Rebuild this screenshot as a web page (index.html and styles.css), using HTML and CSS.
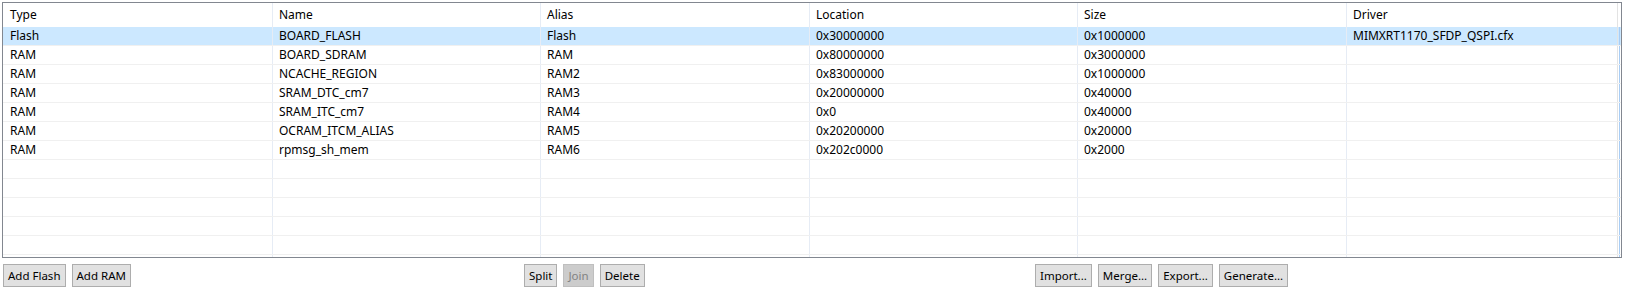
FILE: index.html
```html
<!DOCTYPE html>
<html>
<head>
<meta charset="utf-8">
<link rel="stylesheet" href="styles.css">
</head>
<body>
<div class="panel">
  <div class="table">
    <div class="row head">
      <div class="cell">Type</div>
      <div class="cell">Name</div>
      <div class="cell">Alias</div>
      <div class="cell">Location</div>
      <div class="cell">Size</div>
      <div class="cell">Driver</div>
      <div class="strip"></div>
    </div>
    <div class="body">
      <div class="row selected">
        <div class="cell">Flash</div><div class="cell">BOARD_FLASH</div><div class="cell">Flash</div><div class="cell">0x30000000</div><div class="cell">0x1000000</div><div class="cell">MIMXRT1170_SFDP_QSPI.cfx</div><div class="strip"></div>
      </div>
      <div class="row">
        <div class="cell">RAM</div><div class="cell">BOARD_SDRAM</div><div class="cell">RAM</div><div class="cell">0x80000000</div><div class="cell">0x3000000</div><div class="cell"></div><div class="strip"></div>
      </div>
      <div class="row">
        <div class="cell">RAM</div><div class="cell">NCACHE_REGION</div><div class="cell">RAM2</div><div class="cell">0x83000000</div><div class="cell">0x1000000</div><div class="cell"></div><div class="strip"></div>
      </div>
      <div class="row">
        <div class="cell">RAM</div><div class="cell">SRAM_DTC_cm7</div><div class="cell">RAM3</div><div class="cell">0x20000000</div><div class="cell">0x40000</div><div class="cell"></div><div class="strip"></div>
      </div>
      <div class="row">
        <div class="cell">RAM</div><div class="cell">SRAM_ITC_cm7</div><div class="cell">RAM4</div><div class="cell">0x0</div><div class="cell">0x40000</div><div class="cell"></div><div class="strip"></div>
      </div>
      <div class="row">
        <div class="cell">RAM</div><div class="cell">OCRAM_ITCM_ALIAS</div><div class="cell">RAM5</div><div class="cell">0x20200000</div><div class="cell">0x20000</div><div class="cell"></div><div class="strip"></div>
      </div>
      <div class="row">
        <div class="cell">RAM</div><div class="cell">rpmsg_sh_mem</div><div class="cell">RAM6</div><div class="cell">0x202c0000</div><div class="cell">0x2000</div><div class="cell"></div><div class="strip"></div>
      </div>
      <div class="row"><div class="cell"></div><div class="cell"></div><div class="cell"></div><div class="cell"></div><div class="cell"></div><div class="cell"></div><div class="strip"></div></div>
      <div class="row"><div class="cell"></div><div class="cell"></div><div class="cell"></div><div class="cell"></div><div class="cell"></div><div class="cell"></div><div class="strip"></div></div>
      <div class="row"><div class="cell"></div><div class="cell"></div><div class="cell"></div><div class="cell"></div><div class="cell"></div><div class="cell"></div><div class="strip"></div></div>
      <div class="row"><div class="cell"></div><div class="cell"></div><div class="cell"></div><div class="cell"></div><div class="cell"></div><div class="cell"></div><div class="strip"></div></div>
      <div class="row"><div class="cell"></div><div class="cell"></div><div class="cell"></div><div class="cell"></div><div class="cell"></div><div class="cell"></div><div class="strip"></div></div>
      <div class="row"><div class="cell"></div><div class="cell"></div><div class="cell"></div><div class="cell"></div><div class="cell"></div><div class="cell"></div><div class="strip"></div></div>
    </div>
  </div>
  <div class="actions">
    <div class="group">
      <button class="btn">Add Flash</button>
      <button class="btn">Add RAM</button>
    </div>
    <div class="group">
      <button class="btn">Split</button>
      <button class="btn" disabled>Join</button>
      <button class="btn">Delete</button>
    </div>
    <div class="group">
      <button class="btn">Import...</button>
      <button class="btn">Merge...</button>
      <button class="btn">Export...</button>
      <button class="btn">Generate...</button>
    </div>
  </div>
</div>
</body>
</html>
```

FILE: styles.css
```css
html, body {
  margin: 0;
  padding: 0;
  background: #ffffff;
}
body {
  font-family: "Noto Sans", "Open Sans", sans-serif;
  font-size: 12px;
  color: #000000;
}
.panel {
  padding: 2px 4px 0 2px;
}
.table {
  border: 1px solid #828790;
  height: 254px;
  overflow: hidden;
  background: #ffffff;
}
.row {
  display: grid;
  grid-template-columns: 270px 268px 269px 268px 269px 271px 3px;
  height: 18px;
  border-bottom: 1px solid #f0f0f0;
}
.row.head {
  height: 24px;
  border-bottom: none;
}
.cell {
  box-sizing: border-box;
  border-right: 1px solid #e6ecf5;
  padding-left: 6px;
  display: flex;
  align-items: center;
  white-space: nowrap;
  overflow: hidden;
  line-height: 16px;
}
.cell:first-child {
  padding-left: 7px;
}
.cell:nth-child(6) {
  border-right-color: #e3e3e3;
}
.strip {
  border-right: 1px solid #a8cdf5;
  margin-right: 1px;
}
.head .strip {
  border-right-color: transparent;
}
.row.selected {
  background: #cce8ff;
}
.actions {
  display: grid;
  grid-template-columns: 521px 511px auto;
  padding-left: 1px;
  margin-top: 6px;
}
.group {
  display: flex;
  gap: 6px;
}
.btn {
  font-family: inherit;
  font-size: 11.5px;
  color: #000000;
  background: #e1e1e1;
  border: 1px solid #adadad;
  border-radius: 0;
  height: 23px;
  padding: 0 4px;
  margin: 0;
  line-height: 20px;
}
.btn:disabled {
  background: #cccccc;
  border-color: #bfbfbf;
  color: #838383;
}
```
